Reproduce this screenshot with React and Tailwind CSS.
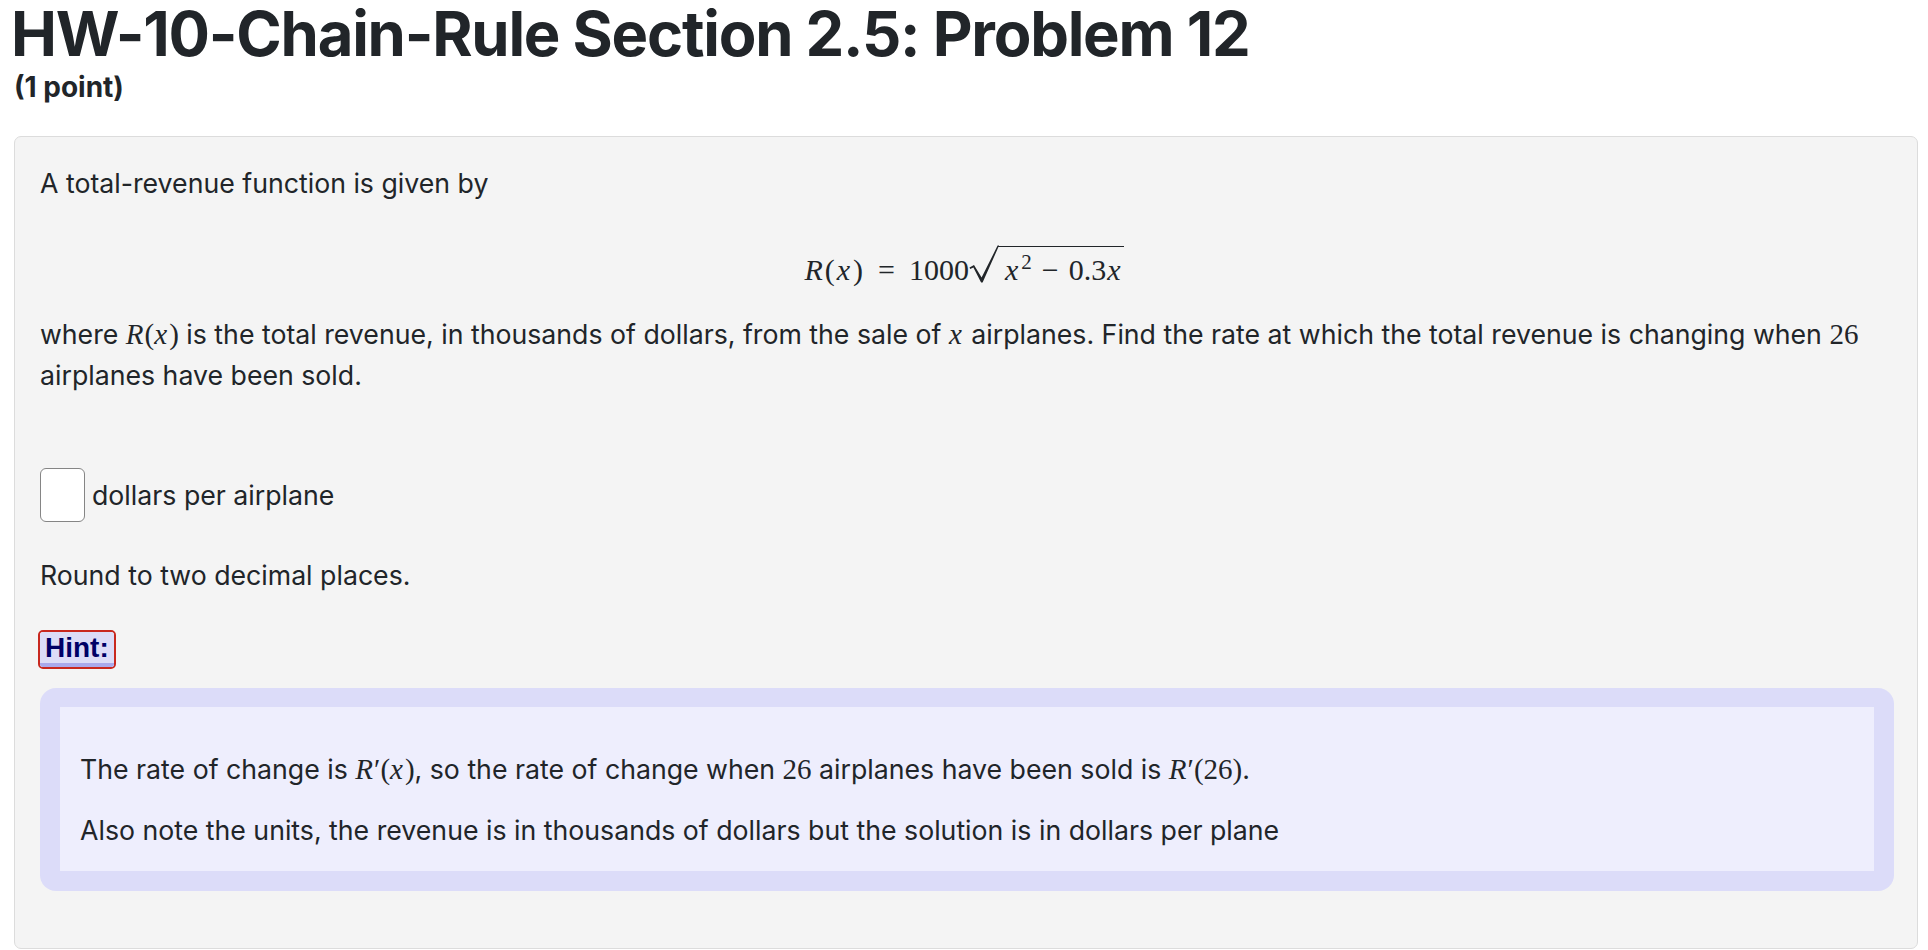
import React from "react";

const serif = "font-['Liberation_Serif','DejaVu_Serif',serif]";

function M({ children }) {
  return <span className={`${serif} text-[29px]`}>{children}</span>;
}

function X({ wide }) {
  return <i className={wide ? "pl-[1px] pr-[3px]" : "pr-[2px]"}>x</i>;
}

function R({ wide }) {
  return <i className={wide ? "pr-[2px]" : "pr-[1px]"}>R</i>;
}

function Radical() {
  return (
    <svg
      width="30"
      height="38"
      viewBox="0 0 30 38"
      className="inline-block align-[-3px] -mt-[10px]"
    >
      <polygon
        fill="#212529"
        points="0.5,22.6 5,20 12.6,32.6 28.6,0.6 30,0.6 30,2.1 29.4,2.1 13.6,37.4 12.1,37.4 4.4,22.6 1.2,24"
      />
    </svg>
  );
}

function Formula() {
  return (
    <div className={`${serif} mt-[45px] text-center text-[30px] leading-[41px]`}>
      <span className="relative -left-[3px]">
        <R wide />
        <span className="pr-[1px]">(</span>
        <X wide />
        <span className="pr-[1px]">)</span>
        <span className="mx-[14px]">=</span>
        <span>1000</span>
        <Radical />
        <span className="inline-block -mt-[8px] leading-[30px] pt-[8px] border-t-[1.5px] border-[#212529] pl-[5px]">
          <X wide />
          <span className="relative -top-[11px] text-[21px]">2</span>
          <span className="mx-[10px]">−</span>
          <span>0.3</span>
          <X wide />
        </span>
      </span>
    </div>
  );
}

function Hint() {
  return (
    <span className="inline-block border-2 border-[#c8281f] rounded-[5px] overflow-hidden align-top">
      <span className="block bg-[#dcdcf7] border-b-[4px] border-[#a9a9ec] px-[5px] leading-[31px] text-[28px] font-bold text-[#000066] font-['Liberation_Sans',Arial,sans-serif]">
        Hint:
      </span>
    </span>
  );
}

export default function App() {
  return (
    <div className="min-h-screen bg-white pl-[14px] pr-[10px] text-[#212529] font-['Inter','Noto_Sans',sans-serif]">
      <h1 className="text-[61.5px] leading-[68px] font-bold tracking-[-0.02em] -ml-[3px] whitespace-nowrap">
        HW-10-Chain-Rule Section 2.5: Problem 12
      </h1>
      <div className="-mt-[1px] text-[28px] leading-[41px] font-bold">(1 point)</div>

      <div className="mt-[28px] rounded-[7px] border border-[#dcdcdc] bg-[#f4f4f4] pt-[26px] pb-[57px] pl-[25px] pr-[23px] text-[26.7px] leading-[41px]">
        <p>A total-revenue function is given by</p>

        <Formula />

        <p className="mt-[24px]">
          where{" "}
          <M>
            <R />(<X />)
          </M>{" "}
          is the total revenue, in thousands of dollars, from the sale of{" "}
          <M>
            <X />
          </M>{" "}
          airplanes. Find the rate at which the total revenue is changing when{" "}
          <M>26</M> airplanes have been sold.
        </p>

        <div className="mt-[72px] flex items-center gap-[7px]">
          <span className="block w-[45px] h-[54px] bg-white border-[1.5px] border-[#858585] rounded-[6px]" />
          <span>dollars per airplane</span>
        </div>

        <p className="mt-[33px]">Round to two decimal places.</p>

        <div className="mt-[34px] -ml-[2px] leading-none">
          <Hint />
        </div>

        <div className="mt-[19px] rounded-[16px] bg-[#dcdcf9] px-[20px] pt-[19px] pb-[20px]">
          <div className="bg-[#eeeefd] pt-[42px] pb-[20px] px-[20px]">
            <p>
              The rate of change is{" "}
              <M>
                <R />′(<X />)
              </M>
              , so the rate of change when <M>26</M> airplanes have been sold is{" "}
              <M>
                <R />′(26)
              </M>
              .
            </p>
            <p className="mt-[20px]">
              Also note the units, the revenue is in thousands of dollars but the solution is in dollars per plane
            </p>
          </div>
        </div>
      </div>
    </div>
  );
}
